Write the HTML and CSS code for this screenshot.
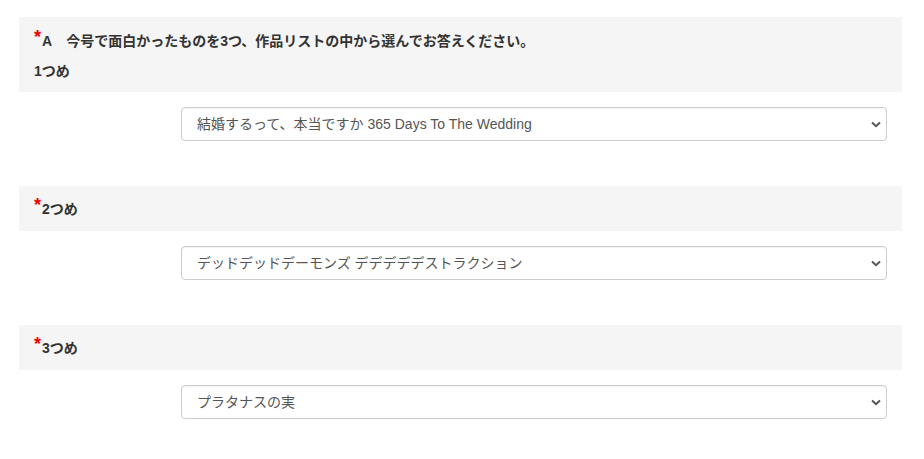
FILE: index.html
```html
<!DOCTYPE html>
<html lang="ja">
<head>
    <meta charset="UTF-8">
    <title>アンケート</title>
    <link rel="stylesheet" href="styles.css">
</head>
<body>
    <div class="form">
        <div class="question first">
            <div class="q-title"><span class="req">*</span>A<span class="q-text">今号で面白かったものを3つ、作品リストの中から選んでお答えください。</span></div>
            <div class="q-sub">1つめ</div>
        </div>
        <div class="answer">
            <div class="select-wrap">
                <select class="select">
                    <option>結婚するって、本当ですか 365 Days To The Wedding</option>
                </select>
                <svg class="chevron" width="10" height="7" viewBox="0 0 10 7"><path d="M1 1.5 L5 5.2 L9 1.5" fill="none" stroke="#555" stroke-width="2"/></svg>
            </div>
        </div>

        <div class="question">
            <div class="q-title"><span class="req">*</span>2つめ</div>
        </div>
        <div class="answer">
            <div class="select-wrap">
                <select class="select">
                    <option>デッドデッドデーモンズ デデデデデストラクション</option>
                </select>
                <svg class="chevron" width="10" height="7" viewBox="0 0 10 7"><path d="M1 1.5 L5 5.2 L9 1.5" fill="none" stroke="#555" stroke-width="2"/></svg>
            </div>
        </div>

        <div class="question">
            <div class="q-title"><span class="req">*</span>3つめ</div>
        </div>
        <div class="answer">
            <div class="select-wrap">
                <select class="select">
                    <option>プラタナスの実</option>
                </select>
                <svg class="chevron" width="10" height="7" viewBox="0 0 10 7"><path d="M1 1.5 L5 5.2 L9 1.5" fill="none" stroke="#555" stroke-width="2"/></svg>
            </div>
        </div>
    </div>
</body>
</html>
```

FILE: styles.css
```css
body {
    margin: 0;
    padding: 17px 22px 0 19px;
    background: white;
    font-family: "Liberation Sans", "Noto Sans CJK JP", sans-serif;
    color: #333;
}
.question {
    background: #f5f5f5;
    padding: 12px 15px 11px 15px;
}
.question.first {
    padding: 13px 15px 10px 15px;
}
.q-title {
    font-size: 14px;
    font-weight: bold;
    line-height: 22px;
}
.q-text {
    margin-left: 14px;
}
.q-sub {
    font-size: 14px;
    font-weight: bold;
    line-height: 22px;
    margin-top: 8px;
}
.req {
    color: #e00;
    font-size: 18px;
    line-height: 0;
    position: relative;
    top: -3px;
    margin-right: 1px;
}
.answer {
    padding: 15px 15px 45px 162px;
}
.select-wrap {
    position: relative;
}
.select {
    appearance: none;
    -webkit-appearance: none;
    width: 100%;
    height: 34px;
    border: 1px solid #ccc;
    border-radius: 4px;
    background: white;
    color: #555;
    font-family: "Liberation Sans", "Noto Sans CJK JP", sans-serif;
    font-size: 14px;
    padding: 0 15px;
    box-shadow: inset 0 1px 1px rgba(0,0,0,0.05);
}
.chevron {
    position: absolute;
    right: 6px;
    top: 14px;
    pointer-events: none;
}
```
